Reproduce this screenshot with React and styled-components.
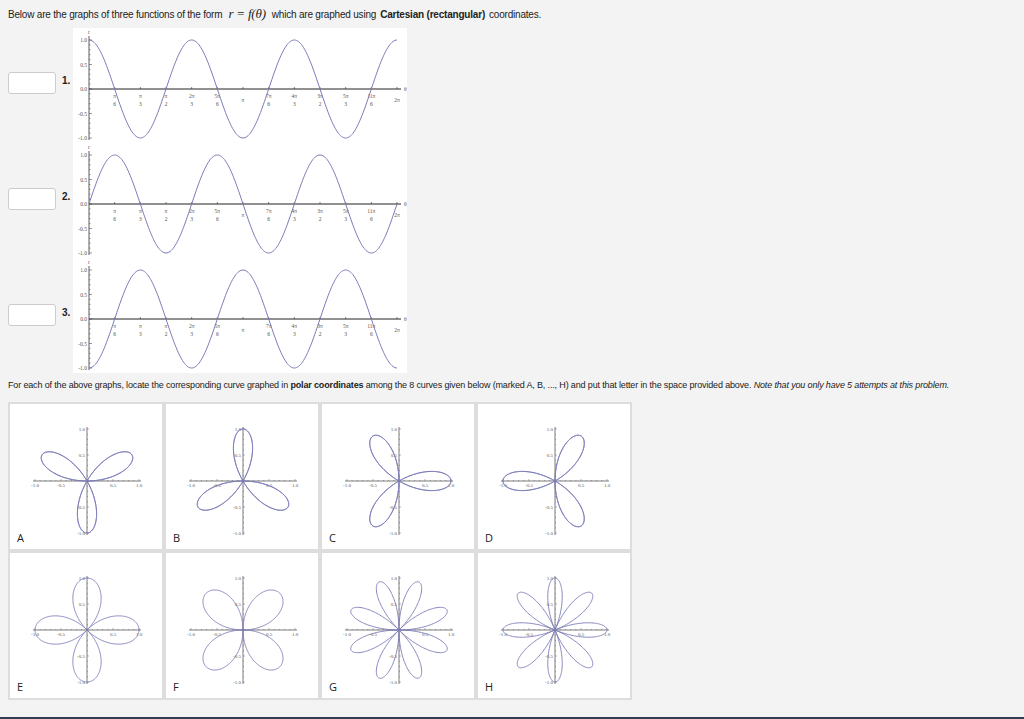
import React from 'react';
import styled, { createGlobalStyle } from 'styled-components';

const Global = createGlobalStyle`
  html, body { margin: 0; background: #f3f3f3; }
  body { font-family: "Liberation Sans", Arial, sans-serif; color: #222; }
`;

const Page = styled.div`
  width: 1024px;
  height: 719px;
  padding: 4px 8px 0 8px;
  box-sizing: border-box;
  overflow: hidden;
  border-bottom: 2px solid #2c3e50;
`;

const Intro = styled.div`
  font-size: 10px;
  letter-spacing: -0.2px;
  height: 20px;
  display: flex;
  align-items: center;
  gap: 4px;
  b { font-weight: bold; }
`;

const Formula = styled.span`
  font-family: "Liberation Serif", serif;
  font-style: italic;
  font-size: 13px;
  margin: 0 2px;
`;

const Questions = styled.div`
  display: grid;
  grid-template-columns: 65px 334px;
  margin-top: 4px;
`;

const Inputs = styled.div`
  display: flex;
  flex-direction: column;
`;

const QRow = styled.div`
  height: 115px;
  display: flex;
  align-items: flex-start;
  padding-top: ${p => p.$top}px;
  box-sizing: border-box;
  gap: 6px;
`;

const Box = styled.div`
  width: 46px;
  height: 20px;
  background: #fff;
  border: 1px solid #ccc;
  border-radius: 3px;
`;

const Num = styled.span`
  font-size: 10px;
  font-weight: bold;
  padding-top: 3px;
`;

const Graphs = styled.div`
  background: #fff;
  display: flex;
  flex-direction: column;
  width: 334px;
`;

const Instructions = styled.p`
  font-size: 9px;
  line-height: 13px;
  margin: 6px 0 10px 0;
  letter-spacing: -0.15px;
  i { font-style: italic; }
`;

const PolarGrid = styled.div`
  display: grid;
  grid-template-columns: repeat(4, 152px);
  grid-auto-rows: 145px;
  gap: 4px;
  padding: 2px;
  background: #ddd;
  width: fit-content;
`;

const Cell = styled.div`
  background: #fff;
  position: relative;
  display: flex;
  flex-direction: column;
  align-items: center;
`;

const Letter = styled.span`
  position: absolute;
  left: 7px;
  bottom: 4px;
  font-family: "Open Sans", sans-serif;
  font-size: 11px;
`;

const Tick = styled.text`
  font-family: "Liberation Serif", serif;
  font-size: ${p => p.$size || 5.5}px;
  fill: #555;
`;

const ink = '#7b7bb8';

const fracs = [
  ['π', '6'], ['π', '3'], ['π', '2'], ['2π', '3'], ['5π', '6'], ['π', ''],
  ['7π', '6'], ['4π', '3'], ['3π', '2'], ['5π', '3'], ['11π', '6'], ['2π', ''],
];

function CartGraph({ f }) {
  const x0 = 16, x1 = 324, yc = 61, amp = 49;
  const sx = t => x0 + (t / (2 * Math.PI)) * (x1 - x0);
  let d = '';
  for (let i = 0; i <= 300; i++) {
    const t = (i / 300) * 2 * Math.PI;
    d += (i ? 'L' : 'M') + sx(t).toFixed(2) + ' ' + (yc - amp * f(t)).toFixed(2);
  }
  return (
    <svg width="334" height="115" viewBox="0 0 334 115">
      <line x1={x0} y1={8} x2={x0} y2={112} stroke="#333" strokeWidth="0.8" />
      {Array.from({ length: 21 }, (_, i) => (
        <line key={i} x1={x0} x2={x0 + (i % 5 ? 1.5 : 3)} y1={yc - amp + i * amp / 10} y2={yc - amp + i * amp / 10} stroke="#333" strokeWidth="0.5" />
      ))}
      {[['1.0', -1], ['0.5', -0.5], ['0.0', 0], ['-0.5', 0.5], ['-1.0', 1]].map(([l, v]) => (
        <Tick key={l} x={x0 - 2} y={yc + v * amp + 2} textAnchor="end">{l}</Tick>
      ))}
      <Tick x={x0 - 1} y={6}>r</Tick>
      <line x1={x0} y1={yc} x2={x1 + 4} y2={yc} stroke="#222" strokeWidth="1" />
      <Tick x={x1 + 7} y={yc + 2}>θ</Tick>
      {fracs.map(([n, dd], i) => {
        const x = sx((i + 1) * Math.PI / 6);
        return (
          <g key={i}>
            <line x1={x} x2={x} y1={yc - 2} y2={yc} stroke="#333" strokeWidth="0.6" />
            <Tick x={x} y={dd ? yc + 9 : yc + 13} textAnchor="middle">{n}</Tick>
            {dd && <Tick x={x} y={yc + 17} textAnchor="middle">{dd}</Tick>}
          </g>
        );
      })}
      <path d={d} fill="none" stroke={ink} strokeWidth="1" />
    </svg>
  );
}

function PolarGraph({ f }) {
  const cx = 77, cy = 77, s = 52;
  let d = '';
  for (let i = 0; i <= 720; i++) {
    const t = (i / 720) * 2 * Math.PI;
    const r = f(t);
    d += (i ? 'L' : 'M') + (cx + s * r * Math.cos(t)).toFixed(2) + ' ' + (cy - s * r * Math.sin(t)).toFixed(2);
  }
  const ticks = Array.from({ length: 21 }, (_, i) => -1 + i * 0.1);
  return (
    <svg width="152" height="145" viewBox="0 0 152 145">
      <line x1={cx - s - 2} x2={cx + s + 2} y1={cy} y2={cy} stroke="#444" strokeWidth="0.7" />
      <line x1={cx} x2={cx} y1={cy - s - 2} y2={cy + s + 2} stroke="#444" strokeWidth="0.7" />
      {ticks.map((v, i) => (
        <g key={i}>
          <line x1={cx + v * s} x2={cx + v * s} y1={cy - (i % 5 ? 1 : 2)} y2={cy} stroke="#444" strokeWidth="0.4" />
          <line y1={cy - v * s} y2={cy - v * s} x1={cx} x2={cx + (i % 5 ? 1 : 2)} stroke="#444" strokeWidth="0.4" />
        </g>
      ))}
      {[['-1.0', -1], ['-0.5', -0.5], ['0.5', 0.5], ['1.0', 1]].map(([l, v]) => (
        <g key={l}>
          <Tick $size={5} x={cx + v * s} y={cy + 6} textAnchor="middle">{l}</Tick>
          <Tick $size={5} x={cx - 2} y={cy - v * s + 2} textAnchor="end">{l}</Tick>
        </g>
      ))}
      <path d={d} fill="none" stroke={ink} strokeWidth="0.9" />
    </svg>
  );
}

const cart = [
  t => Math.cos(3 * t),
  t => Math.sin(3 * t),
  t => -Math.cos(3 * t),
];

const polar = [
  ['A', t => Math.sin(3 * t)],
  ['B', t => -Math.sin(3 * t)],
  ['C', t => Math.cos(3 * t)],
  ['D', t => -Math.cos(3 * t)],
  ['E', t => Math.cos(2 * t)],
  ['F', t => Math.sin(2 * t)],
  ['G', t => Math.sin(4 * t)],
  ['H', t => Math.cos(4 * t)],
];

export default function App() {
  return (
    <Page>
      <Global />
      <Intro>
        Below are the graphs of three functions of the form <Formula>r = f(θ)</Formula> which are graphed using
        <b>Cartesian (rectangular)</b> coordinates.
      </Intro>
      <Questions>
        <Inputs>
          {[1, 2, 3].map((n, i) => (
            <QRow key={n} $top={[44, 45, 46][i]}>
              <Box />
              <Num>{n}.</Num>
            </QRow>
          ))}
        </Inputs>
        <Graphs>
          {cart.map((f, i) => <CartGraph key={i} f={f} />)}
        </Graphs>
      </Questions>
      <Instructions>
        For each of the above graphs, locate the corresponding curve graphed in <b>polar coordinates</b> among the 8 curves given below (marked A, B, ..., H) and put that letter in the space provided above. <i>Note that you only have 5 attempts at this problem.</i>
      </Instructions>
      <PolarGrid>
        {polar.map(([l, f]) => (
          <Cell key={l}>
            <PolarGraph f={f} />
            <Letter>{l}</Letter>
          </Cell>
        ))}
      </PolarGrid>
    </Page>
  );
}
